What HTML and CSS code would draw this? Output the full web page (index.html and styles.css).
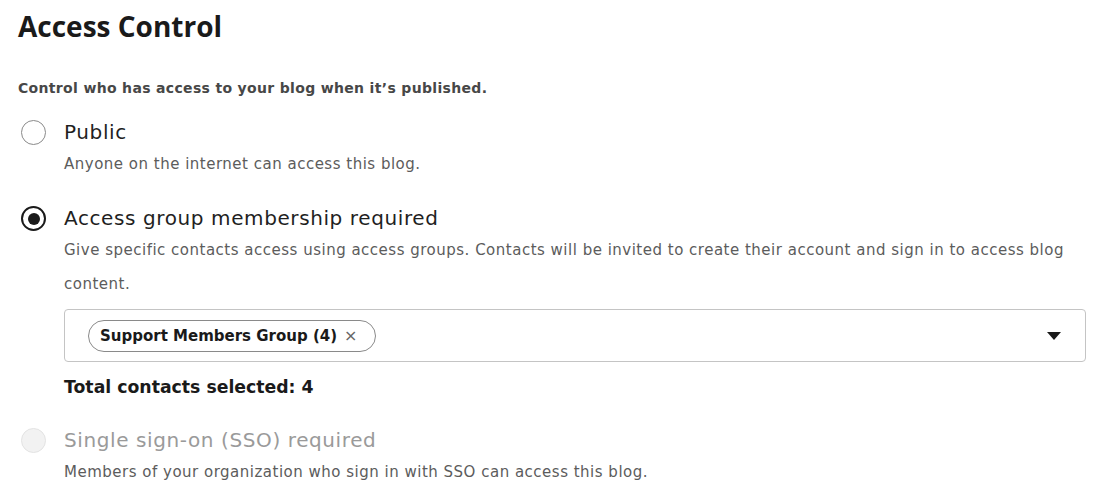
FILE: index.html
```html
<!DOCTYPE html>
<html lang="en">

<head>
    <meta charset="UTF-8" />
    <meta name="viewport" content="width=device-width, initial-scale=1.0" />
    <title>Access Control</title>
    <link rel="stylesheet" href="styles.css">
</head>

<body>
    <div class="panel">
        <h1 class="title">Access Control</h1>
        <p class="subtitle">Control who has access to your blog when it’s published.</p>

        <div class="option">
            <span class="radio"></span>
            <div class="option-body">
                <div class="option-label">Public</div>
                <div class="option-desc">Anyone on the internet can access this blog.</div>
            </div>
        </div>

        <div class="option">
            <span class="radio checked"></span>
            <div class="option-body">
                <div class="option-label">Access group membership required</div>
                <div class="option-desc">Give specific contacts access using access groups. Contacts will be invited to create their account and sign in to access blog content.</div>
                <div class="select">
                    <span class="chip">Support Members Group (4) <span class="chip-x">×</span></span>
                    <span class="caret"></span>
                </div>
                <div class="total">Total contacts selected: 4</div>
            </div>
        </div>

        <div class="option disabled">
            <span class="radio"></span>
            <div class="option-body">
                <div class="option-label">Single sign-on (SSO) required</div>
                <div class="option-desc">Members of your organization who sign in with SSO can access this blog.</div>
            </div>
        </div>
    </div>
</body>

</html>
```

FILE: styles.css
```css
* {
    margin: 0;
    padding: 0;
    box-sizing: border-box;
}

body {
    font-family: 'DejaVu Sans', sans-serif;
    background: #fff;
    color: #1f1f1f;
}

.panel {
    padding: 8px 14px 0 18px;
}

.title {
    font-family: 'Open Sans', sans-serif;
    font-size: 28px;
    line-height: 36px;
    font-weight: 700;
    color: #1a1a1a;
}

.subtitle {
    margin-top: 34px;
    font-size: 14px;
    line-height: 20px;
    font-weight: 700;
    letter-spacing: 0.33px;
    color: #474747;
}

.option {
    display: flex;
    gap: 18px;
    margin-top: 20px;
}

.option + .option {
    margin-top: 23px;
}

.radio {
    flex: none;
    width: 25px;
    height: 25px;
    margin-top: 2px;
    margin-left: 3px;
    border: 1.5px solid #8a8a8a;
    border-radius: 50%;
    display: flex;
    align-items: center;
    justify-content: center;
}

.radio.checked {
    border: 2px solid #1a1a1a;
}

.radio.checked::after {
    content: "";
    width: 12px;
    height: 12px;
    border-radius: 50%;
    background: #1a1a1a;
}

.option-body {
    flex: 1;
}

.option-label {
    font-size: 20px;
    line-height: 28px;
    letter-spacing: 0.6px;
    color: #1f1f1f;
}

.option-desc {
    margin-top: 1px;
    font-size: 15px;
    line-height: 34px;
    letter-spacing: 0.5px;
    color: #5c5c5c;
}

.select {
    margin-top: 8px;
    height: 53px;
    border: 1px solid #c4c4c4;
    border-radius: 4px;
    display: flex;
    align-items: center;
    justify-content: space-between;
    padding: 0 24px 0 23px;
}

.chip {
    display: inline-flex;
    align-items: center;
    height: 32px;
    padding: 0 18px 0 11px;
    border: 1px solid #8a8a8a;
    border-radius: 16px;
    font-size: 15px;
    font-weight: 700;
    color: #1a1a1a;
}

.chip-x {
    margin-left: 7px;
    font-weight: 400;
    font-size: 16px;
    color: #666;
}

.caret {
    width: 0;
    height: 0;
    border-left: 7px solid transparent;
    border-right: 7px solid transparent;
    border-top: 8px solid #1a1a1a;
}

.total {
    margin-top: 13px;
    font-size: 17.3px;
    line-height: 24px;
    font-weight: 700;
    color: #1a1a1a;
}

.option.disabled {
    margin-top: 27px;
}

.option.disabled .radio {
    border: 1px solid #e3e3e3;
    background: #f2f2f2;
}

.option.disabled .option-label {
    color: #9a9a9a;
}
```
